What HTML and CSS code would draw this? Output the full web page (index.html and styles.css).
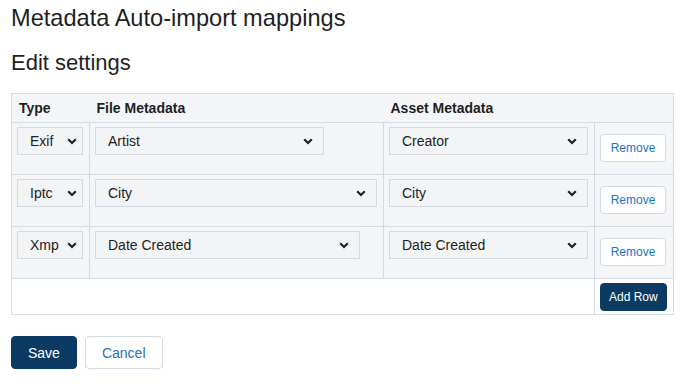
FILE: index.html
```html
<!DOCTYPE html>
<html lang="en">
<head>
  <meta charset="UTF-8">
  <meta name="viewport" content="width=device-width, initial-scale=1.0">
  <title>Metadata Auto-import mappings</title>
  <link rel="stylesheet" href="styles.css">
</head>
<body>
  <div class="page">
    <h1>Metadata Auto-import mappings</h1>
    <h2>Edit settings</h2>

    <!-- Mapping table -->
    <table class="mappings">
      <colgroup>
        <col class="col-type">
        <col class="col-file">
        <col class="col-asset">
        <col class="col-action">
      </colgroup>
      <thead>
        <tr>
          <th>Type</th>
          <th>File Metadata</th>
          <th>Asset Metadata</th>
          <th></th>
        </tr>
      </thead>
      <tbody>
        <tr>
          <td>
            <select class="select select-type">
              <option>Exif</option>
              <option>Iptc</option>
              <option>Xmp</option>
            </select>
          </td>
          <td>
            <select class="select file-artist">
              <option>Artist</option>
            </select>
          </td>
          <td>
            <select class="select select-asset">
              <option>Creator</option>
            </select>
          </td>
          <td class="action"><button class="btn btn-sm btn-outline">Remove</button></td>
        </tr>
        <tr>
          <td>
            <select class="select select-type">
              <option>Iptc</option>
              <option>Exif</option>
              <option>Xmp</option>
            </select>
          </td>
          <td>
            <select class="select file-city">
              <option>City</option>
            </select>
          </td>
          <td>
            <select class="select select-asset">
              <option>City</option>
            </select>
          </td>
          <td class="action"><button class="btn btn-sm btn-outline">Remove</button></td>
        </tr>
        <tr>
          <td>
            <select class="select select-type">
              <option>Xmp</option>
              <option>Exif</option>
              <option>Iptc</option>
            </select>
          </td>
          <td>
            <select class="select file-date">
              <option>Date Created</option>
            </select>
          </td>
          <td>
            <select class="select select-asset">
              <option>Date Created</option>
            </select>
          </td>
          <td class="action"><button class="btn btn-sm btn-outline">Remove</button></td>
        </tr>
        <tr class="footer-row">
          <td colspan="3"></td>
          <td class="action"><button class="btn btn-sm btn-primary">Add Row</button></td>
        </tr>
      </tbody>
    </table>

    <div class="form-actions">
      <button class="btn btn-primary">Save</button>
      <button class="btn btn-outline">Cancel</button>
    </div>
  </div>
</body>
</html>
```

FILE: styles.css
```css
/* General Styles */
body {
  font-family: "Liberation Sans", Arial, sans-serif;
  margin: 0;
  padding: 0;
  background-color: #fff;
  color: #1f1f1f;
}

.page {
  padding: 4px 11px;
}

h1 {
  margin: 0;
  font-size: 23.6px;
  font-weight: normal;
  line-height: 29px;
}

h2 {
  margin: 17px 0 17px;
  font-size: 22px;
  font-weight: normal;
  line-height: 26px;
}

/* Mapping table */
.mappings {
  border-collapse: collapse;
  table-layout: fixed;
  width: 662px;
  border: 1px solid #d5dbe4;
}

.col-type { width: 78px; }
.col-file { width: 294px; }
.col-asset { width: 211px; }
.col-action { width: 79px; }

.mappings th {
  background-color: #f4f5f7;
  border-bottom: 1px solid #d5dbe4;
  padding: 6px 7px 5px;
  font-size: 14px;
  line-height: 17px;
  font-weight: bold;
  text-align: left;
  color: #1f1f1f;
}

.mappings td {
  background-color: #f4f5f7;
  border: 1px solid #d5dbe4;
  padding: 4px 5px 5px;
  vertical-align: top;
}

.mappings td.action {
  vertical-align: middle;
}

.mappings .footer-row td {
  background-color: #fff;
  padding: 4px 5px 3px;
}

/* Selects */
.select {
  display: block;
  appearance: none;
  -webkit-appearance: none;
  height: 28px;
  margin: 0 0 14px;
  padding: 0 26px 0 12px;
  font-family: "Liberation Sans", Arial, sans-serif;
  font-size: 14px;
  color: #222;
  background-color: #f3f4f6;
  background-image: url("data:image/svg+xml,%3Csvg xmlns='http://www.w3.org/2000/svg' width='10' height='7' viewBox='0 0 10 7'%3E%3Cpath d='M1.2 1.2l3.8 3.8 3.8-3.8' fill='none' stroke='%23222' stroke-width='2.2'/%3E%3C/svg%3E");
  background-repeat: no-repeat;
  background-position: right 10px center;
  border: 1px solid #d6dae1;
  border-radius: 0;
}

.select-type {
  width: 66px;
  padding-right: 16px;
  background-position: right 5px center;
}

.select-asset { width: 199px; }
.file-artist { width: 229px; }
.file-city { width: 282px; }
.file-date { width: 265px; }

/* Buttons */
.btn {
  height: 33px;
  padding: 0 16px;
  font-family: "Liberation Sans", Arial, sans-serif;
  font-size: 14px;
  border-radius: 4px;
  cursor: pointer;
}

.btn-sm {
  height: 28px;
  min-width: 66px;
  padding: 0 8px;
  font-size: 12px;
}

.btn-primary {
  background-color: #0b3b62;
  border: 1px solid #0b3b62;
  color: #fff;
}

.btn-outline {
  background-color: #fff;
  border: 1px solid #d3dae4;
  color: #1c73c4;
}

.form-actions {
  display: flex;
  gap: 8px;
  margin-top: 21px;
}
```
